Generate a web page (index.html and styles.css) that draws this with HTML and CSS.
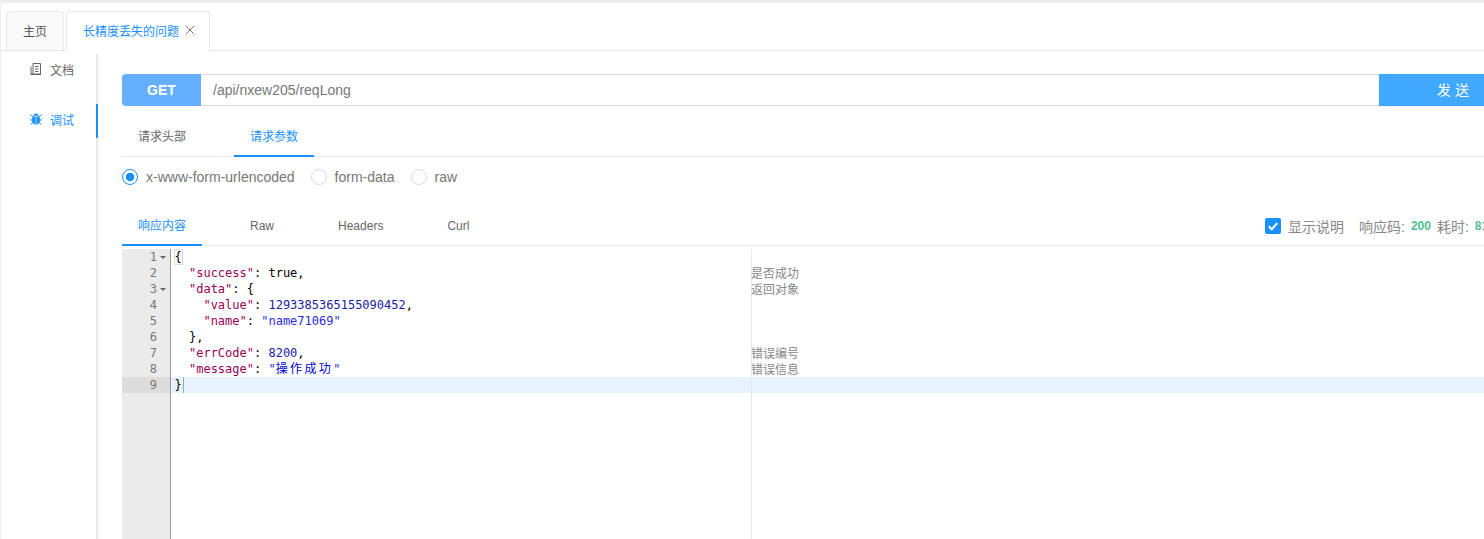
FILE: index.html
```html
<!DOCTYPE html>
<html lang="zh-CN">
<head>
<meta charset="utf-8">
<title>长精度丢失的问题</title>
<link rel="stylesheet" href="styles.css">
</head>
<body>
<div class="app">
  <nav class="tabbar">
    <div class="page-tab">主页</div>
    <div class="page-tab is-active">长精度丢失的问题
      <svg class="close" viewBox="0 0 10 10" width="10" height="10"><path d="M.8.8l8.4 8.4M9.2.8L.8 9.2" stroke="#777" stroke-width="1" fill="none"/></svg>
    </div>
  </nav>
  <div class="body">
    <aside class="side">
      <div class="side-item">
        <svg class="side-icon" viewBox="0 0 12 12" width="12" height="12"><path d="M3 .5h7.500v10.500H1V3.500M3 .5v10.500M.5 11.500h10.500M5 3.500h3.500M5 6h3.500M5 8.500h3.500" stroke="#666" fill="none"/></svg>
        文档
      </div>
      <div class="side-item is-active">
        <svg class="side-icon" viewBox="0 0 12 12" width="12" height="12"><path d="M6 .5c1.500 0 2.600 1 2.600 2.300H3.400C3.400 1.500 4.500.5 6 .5zM3 3.500h6c.8 1 1 2.200 1 3.800 0 2.600-1.600 4.200-4 4.200s-4-1.600-4-4.200c0-1.600.2-2.800 1-3.800z" fill="#1890ff"/><path d="M.5 1.500l2.500 2.500M11.500 1.500L9 4M0 7h2M12 7h-2M.5 11.500L3 9.500M11.500 11.500L9 9.500" stroke="#1890ff" fill="none"/><path d="M6 4v7" stroke="#fff" stroke-width=".7"/></svg>
        调试
      </div>
    </aside>
    <main class="main">
      <div class="urlbar">
        <div class="method">GET</div>
        <div class="url">/api/nxew205/reqLong</div>
        <div class="send">发 送</div>
      </div>
      <div class="tabs req-tabs">
        <div class="tab">请求头部</div>
        <div class="tab is-active">请求参数</div>
      </div>
      <div class="radios">
        <label class="radio is-checked"><span class="dot"></span>x-www-form-urlencoded</label>
        <label class="radio"><span class="dot"></span>form-data</label>
        <label class="radio"><span class="dot"></span>raw</label>
      </div>
      <div class="tabs res-tabs">
        <div class="tab is-active">响应内容</div>
        <div class="tab">Raw</div>
        <div class="tab">Headers</div>
        <div class="tab">Curl</div>
        <div class="res-info">
          <span class="check"><svg viewBox="0 0 16 16" width="16" height="16"><path d="M3.800 8.200l3 3 5.400-6" stroke="#fff" stroke-width="2" fill="none"/></svg></span>
          <span class="show">显示说明</span>
          <span class="stat">响应码:</span><b class="num">200</b>
          <span class="stat">耗时:</span><b class="num">81 ms</b>
        </div>
      </div>
      <div class="editor">
        <div class="row"><div class="gut">1<i class="fold"></i></div><pre class="code"><span class="mark">{</span></pre><div class="desc"></div></div>
        <div class="row"><div class="gut">2</div><pre class="code">  <span class="k">"success"</span>: true,</pre><div class="desc">是否成功</div></div>
        <div class="row"><div class="gut">3<i class="fold"></i></div><pre class="code">  <span class="k">"data"</span>: {</pre><div class="desc">返回对象</div></div>
        <div class="row"><div class="gut">4</div><pre class="code">    <span class="k">"value"</span>: <span class="n">1293385365155090452</span>,</pre><div class="desc"></div></div>
        <div class="row"><div class="gut">5</div><pre class="code">    <span class="k">"name"</span>: <span class="s">"name71069"</span></pre><div class="desc"></div></div>
        <div class="row"><div class="gut">6</div><pre class="code">  },</pre><div class="desc"></div></div>
        <div class="row"><div class="gut">7</div><pre class="code">  <span class="k">"errCode"</span>: <span class="n">8200</span>,</pre><div class="desc">错误编号</div></div>
        <div class="row"><div class="gut">8</div><pre class="code">  <span class="k">"message"</span>: <span class="s">"<span class="cjk">操作成功</span>"</span></pre><div class="desc">错误信息</div></div>
        <div class="row is-current"><div class="gut">9</div><pre class="code">}<span class="cursor"></span></pre><div class="desc"></div></div>
        <div class="row filler"><div class="gut"></div><div class="code"></div><div class="desc"></div></div>
      </div>
    </main>
  </div>
</div>
</body>
</html>
```
FILE: styles.css
```css
* { box-sizing: border-box; }
html, body { margin: 0; height: 100%; overflow: hidden; background: #fff; }
body { font-family: "Liberation Sans", "Noto Sans CJK SC", sans-serif; font-size: 12px; color: #666; }
.app { height: 539px; width: 1484px; display: flex; flex-direction: column; border-top: 3px solid #eee; border-left: 1px solid #eee; overflow: hidden; }
.tabbar { height: 48px; flex: none; display: flex; align-items: flex-end; gap: 2px; padding: 8px 0 0 5px; border-bottom: 1px solid #e8e8e8; }
.page-tab { height: 40px; margin-bottom: -1px; padding: 0 16px 2px; display: flex; align-items: center; background: #fafafa; border: 1px solid #e8e8e8; border-radius: 4px 4px 0 0; color: #555; }
.page-tab.is-active { background: #fff; color: #1890ff; border-bottom-color: #fff; padding-left: 16px; padding-right: 14px; }
.close { margin-left: 6px; }
.body { flex: 1; display: flex; min-height: 0; }
.side { width: 97px; flex: none; margin-top: 3px; border-right: 2px solid #e8e8e8; }
.side-item { height: 34px; margin-bottom: 16px; margin-right: -2px; padding: 0 0 4px 29px; display: flex; align-items: center; gap: 8px; color: #666; border-right: 2px solid transparent; }
.side-icon { flex: none; }
.side-item.is-active { color: #1890ff; border-right-color: #1890ff; }
.main { flex: 1; min-width: 0; padding: 23px 0 0 24px; display: flex; flex-direction: column; overflow: hidden; }
.urlbar { height: 32px; flex: none; display: flex; width: 1405px; }
.method { width: 79px; flex: none; background: #64afff; color: #fff; font-size: 14px; font-weight: 700; text-align: center; line-height: 32px; border-radius: 4px 0 0 4px; }
.url { flex: 1; border: 1px solid #d9d9d9; border-left: 0; border-right: 0; padding-left: 12px; line-height: 30px; font-size: 14px; color: #777; }
.send { width: 148px; flex: none; background: #40a9ff; color: #fff; font-size: 14px; line-height: 32px; text-align: center; box-shadow: 0 2px 0 rgba(0,0,0,.035); }
.tabs { display: flex; flex: none; border-bottom: 1px solid #e8e8e8; width: 1400px; font-size: 12px; }
.req-tabs { margin-top: 15px; height: 36px; }
.res-tabs { margin-top: 15px; height: 44px; padding-top: 4px; }
.tab { padding: 0 16px; margin-right: 32px; margin-bottom: -1px; color: #666; border-bottom: 2px solid transparent; white-space: nowrap; }
.req-tabs .tab { line-height: 32px; }
.res-tabs .tab { line-height: 40px; }
.tab.is-active { color: #1890ff; border-bottom-color: #1890ff; }
.radios { flex: none; display: flex; align-items: center; height: 20px; margin-top: 10px; font-size: 14px; color: #777; }
.radio { display: flex; align-items: center; gap: 8px; margin-right: 16px; }
.dot { width: 16px; height: 16px; border: 1px solid #d9d9d9; border-radius: 50%; display: block; }
.radio.is-checked .dot { border-color: #1890ff; background: radial-gradient(circle, #1890ff 0 4px, #fff 4.5px); }
.res-info { margin-left: auto; width: 257px; flex: none; display: flex; align-items: center; height: 40px; font-size: 14px; color: #888; white-space: nowrap; }
.check { width: 16px; height: 16px; border-radius: 2px; background: #1890ff; display: block; margin-right: 7px; }
.check svg { display: block; }
.show { margin-right: 15px; }
.stat { margin-right: 6px; }
.num { color: #52bd94; font-size: 12px; margin-right: 6px; }
.editor { flex: 1; min-height: 0; margin-top: 3px; display: flex; flex-direction: column; font-family: "DejaVu Sans Mono", "Noto Sans CJK SC", monospace; font-size: 12px; color: #000; }
.row { height: 16px; flex: none; display: grid; grid-template-columns: 49px 580px 1fr; line-height: 16px; }
.filler { flex: 1; }
.gut { background: #ebebeb; border-right: 1px solid #999; color: #777; text-align: right; padding-right: 13px; position: relative; }
.fold { position: absolute; right: 4px; top: 7px; border: 3px solid transparent; border-top: 3px solid #666; border-bottom: 0; }
.code { margin: 0; padding-left: 3.500px; font: inherit; white-space: pre; }
.desc { box-shadow: inset 1px 0 #e8e8e8; font-family: "Liberation Sans", "Noto Sans CJK SC", sans-serif; font-size: 12px; color: #888; padding-top: 1px; }
.k { color: #905; }
.n { color: #1a1aa6; }
.s { color: #2a2ae0; }
.cjk { color: #0000e0; letter-spacing: 2.400px; }
.mark { outline: 1px solid #ddd; }
.is-current .gut { background: #dcdcdc; }
.is-current { background: #e8f2fe; }
.cursor { display: inline-block; width: 1px; height: 16px; background: #9aa; vertical-align: top; margin-left: 1px; }
```
